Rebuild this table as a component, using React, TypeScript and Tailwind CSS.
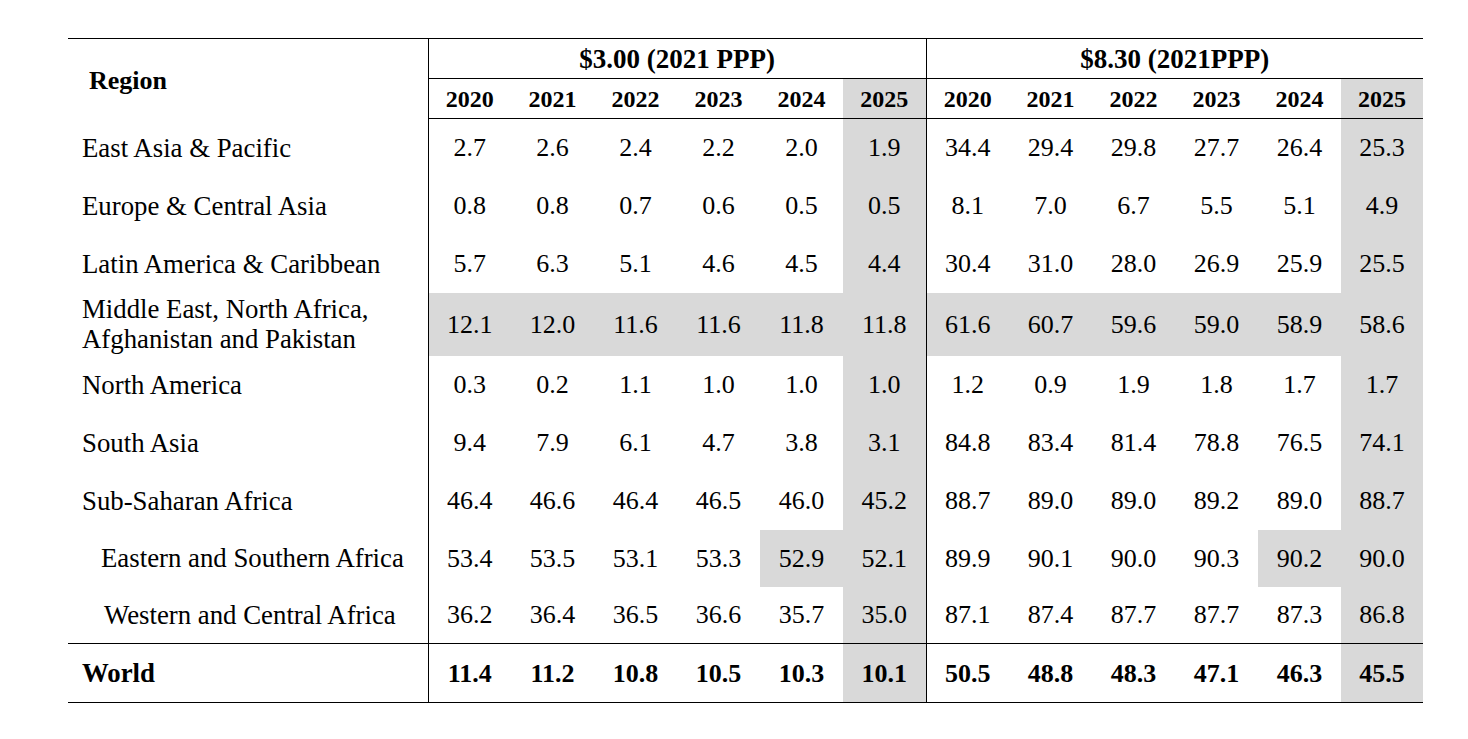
import React from "react";

type Row = {
  region: string[];
  indent?: "east" | "west";
  a: string[];
  b: string[];
  h: string;
  shadeRow?: boolean;
  shade2024?: boolean;
};

const rows: Row[] = [
  { region: ["East Asia & Pacific"], a: ["2.7", "2.6", "2.4", "2.2", "2.0", "1.9"], b: ["34.4", "29.4", "29.8", "27.7", "26.4", "25.3"], h: "h-[58px]" },
  { region: ["Europe & Central Asia"], a: ["0.8", "0.8", "0.7", "0.6", "0.5", "0.5"], b: ["8.1", "7.0", "6.7", "5.5", "5.1", "4.9"], h: "h-[58px]" },
  { region: ["Latin America & Caribbean"], a: ["5.7", "6.3", "5.1", "4.6", "4.5", "4.4"], b: ["30.4", "31.0", "28.0", "26.9", "25.9", "25.5"], h: "h-[58px]" },
  { region: ["Middle East, North Africa,", "Afghanistan and Pakistan"], a: ["12.1", "12.0", "11.6", "11.6", "11.8", "11.8"], b: ["61.6", "60.7", "59.6", "59.0", "58.9", "58.6"], h: "h-[63px]", shadeRow: true },
  { region: ["North America"], a: ["0.3", "0.2", "1.1", "1.0", "1.0", "1.0"], b: ["1.2", "0.9", "1.9", "1.8", "1.7", "1.7"], h: "h-[58px]" },
  { region: ["South Asia"], a: ["9.4", "7.9", "6.1", "4.7", "3.8", "3.1"], b: ["84.8", "83.4", "81.4", "78.8", "76.5", "74.1"], h: "h-[58px]" },
  { region: ["Sub-Saharan Africa"], a: ["46.4", "46.6", "46.4", "46.5", "46.0", "45.2"], b: ["88.7", "89.0", "89.0", "89.2", "89.0", "88.7"], h: "h-[58px]" },
  { region: ["Eastern and Southern Africa"], indent: "east", a: ["53.4", "53.5", "53.1", "53.3", "52.9", "52.1"], b: ["89.9", "90.1", "90.0", "90.3", "90.2", "90.0"], h: "h-[57px]", shade2024: true },
  { region: ["Western and Central Africa"], indent: "west", a: ["36.2", "36.4", "36.5", "36.6", "35.7", "35.0"], b: ["87.1", "87.4", "87.7", "87.7", "87.3", "86.8"], h: "h-[57px]" },
];

const world = {
  a: ["11.4", "11.2", "10.8", "10.5", "10.3", "10.1"],
  b: ["50.5", "48.8", "48.3", "47.1", "46.3", "45.5"],
};

const years = ["2020", "2021", "2022", "2023", "2024", "2025"];

function cellShade(i: number, row?: Row) {
  if (i === 5) return "bg-[#d9d9d9]";
  if (row?.shadeRow) return "bg-[#d9d9d9]";
  if (row?.shade2024 && i === 4) return "bg-[#d9d9d9]";
  return "";
}

export default function App() {
  return (
    <div className="min-h-[739px] w-full bg-white pt-[38px] pl-[68px] text-black font-['Liberation_Serif','Times_New_Roman',serif]">
      <table className="border-collapse table-fixed w-[1355px]">
        <colgroup>
          <col className="w-[360px]" />
          {years.map((y) => (
            <col key={"a" + y} className="w-[83px]" />
          ))}
          {years.map((y, i) => (
            <col key={"b" + y} className={i === 5 ? "w-[82px]" : "w-[83px]"} />
          ))}
        </colgroup>
        <thead className="leading-[30px]">
          <tr className="h-[40px] border-t border-black">
            <th rowSpan={2} className="text-left align-middle pl-[21px] pt-[4px] text-[26px] font-bold">
              Region
            </th>
            <th colSpan={6} className="p-0 border-l border-b border-black text-center text-[27px] font-bold">
              $3.00 (2021 PPP)
            </th>
            <th colSpan={6} className="p-0 border-l border-b border-black text-center text-[27px] font-bold">
              $8.30 (2021PPP)
            </th>
          </tr>
          <tr className="h-[40px]">
            {years.map((y, i) => (
              <th key={"ha" + y} className={`p-0 border-b border-black text-center text-[24px] font-bold ${i === 0 ? "border-l" : ""} ${cellShade(i)}`}>
                {y}
              </th>
            ))}
            {years.map((y, i) => (
              <th key={"hb" + y} className={`p-0 border-b border-black text-center text-[24px] font-bold ${i === 0 ? "border-l" : ""} ${cellShade(i)}`}>
                {y}
              </th>
            ))}
          </tr>
        </thead>
        <tbody className="text-[26px]">
          {rows.map((r) => (
            <tr key={r.region.join(" ")} className={r.h}>
              <td
                className={`align-middle text-[26.8px] leading-[30px] ${
                  r.indent === "east" ? "pl-[33px]" : r.indent === "west" ? "pl-[36px]" : "pl-[14px]"
                }`}
              >
                {r.region.map((line) => (
                  <div key={line}>{line}</div>
                ))}
              </td>
              {r.a.map((v, i) => (
                <td key={"a" + i} className={`text-center ${i === 0 ? "border-l border-black" : ""} ${cellShade(i, r)}`}>
                  {v}
                </td>
              ))}
              {r.b.map((v, i) => (
                <td key={"b" + i} className={`text-center ${i === 0 ? "border-l border-black" : ""} ${cellShade(i, r)}`}>
                  {v}
                </td>
              ))}
            </tr>
          ))}
          <tr className="h-[59px] border-t border-b border-black font-bold">
            <td className="pl-[14px] text-[26.8px]">World</td>
            {world.a.map((v, i) => (
              <td key={"wa" + i} className={`text-center ${i === 0 ? "border-l border-black" : ""} ${cellShade(i)}`}>
                {v}
              </td>
            ))}
            {world.b.map((v, i) => (
              <td key={"wb" + i} className={`text-center ${i === 0 ? "border-l border-black" : ""} ${cellShade(i)}`}>
                {v}
              </td>
            ))}
          </tr>
        </tbody>
      </table>
    </div>
  );
}
